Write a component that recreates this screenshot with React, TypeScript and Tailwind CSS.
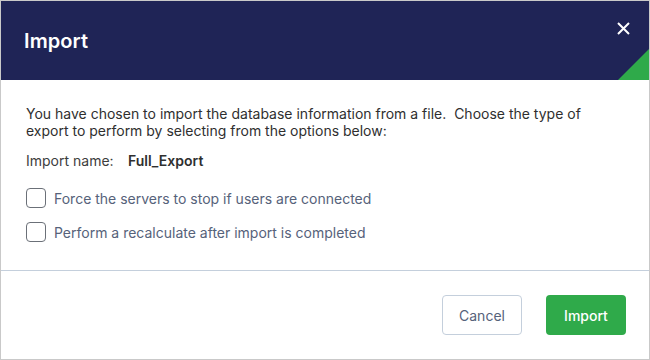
import { useState } from 'react'

function Checkbox({ label }: { label: string }) {
  const [checked, setChecked] = useState(false)
  return (
    <label className="flex items-center gap-[8px] cursor-pointer">
      <span
        onClick={() => setChecked(!checked)}
        className="w-[20px] h-[20px] rounded-[4px] border border-[#6b7078] bg-white flex items-center justify-center"
      >
        {checked && (
          <svg width="12" height="12" viewBox="0 0 12 12" fill="none">
            <path d="M2 6.5l2.5 2.5L10 3.5" stroke="#2eaa4a" strokeWidth="2" strokeLinecap="round" strokeLinejoin="round" />
          </svg>
        )}
      </span>
      <span className="text-[14px] leading-[17px] text-[#56627a]">{label}</span>
    </label>
  )
}

export default function App() {
  return (
    <div
      className="w-[650px] h-[360px] border border-[#c9c9c9] bg-white flex flex-col"
      style={{ fontFamily: 'Inter, "Noto Sans", sans-serif' }}
    >
      <header className="relative h-[79px] bg-[#1f2456] flex items-center pl-[23px] overflow-hidden">
        <h1 className="text-white text-[20px] font-semibold leading-none tracking-[0.1px]">Import</h1>
        <button className="absolute top-[20px] right-[19px] w-[14px] h-[14px] flex items-center justify-center">
          <svg width="13" height="13" viewBox="0 0 13 13" fill="none">
            <path d="M1 1l11 11M12 1L1 12" stroke="#ffffff" strokeWidth="2" />
          </svg>
        </button>
        <div className="absolute right-0 bottom-0 w-0 h-0 border-l-[31px] border-l-transparent border-b-[31px] border-b-[#2faa4a]" />
      </header>

      <section className="h-[190px] pt-[25px] pl-[25px] pr-[30px] text-[14px] leading-[17px]">
        <p className="text-[#2f2f2f]">
          You have chosen to import the database information from a file.&nbsp; Choose the type of export to perform by selecting from the options below:
        </p>
        <div className="mt-[13px] flex">
          <span className="text-[#3d3d3d] w-[102px]">Import name:</span>
          <span className="text-[#2f2f2f] font-semibold">Full_Export</span>
        </div>
        <div className="mt-[19px] flex flex-col gap-[14px]">
          <Checkbox label="Force the servers to stop if users are connected" />
          <Checkbox label="Perform a recalculate after import is completed" />
        </div>
      </section>

      <footer className="flex-1 border-t border-[#c4cfdc] flex justify-end items-start gap-[24px] pt-[24px] pr-[23px]">
        <button className="w-[80px] h-[40px] rounded-[4px] border border-[#c4cfdc] bg-white text-[14px] text-[#56627a]">
          Cancel
        </button>
        <button className="w-[80px] h-[40px] rounded-[4px] bg-[#2faa4a] text-[14px] font-medium text-white">
          Import
        </button>
      </footer>
    </div>
  )
}
